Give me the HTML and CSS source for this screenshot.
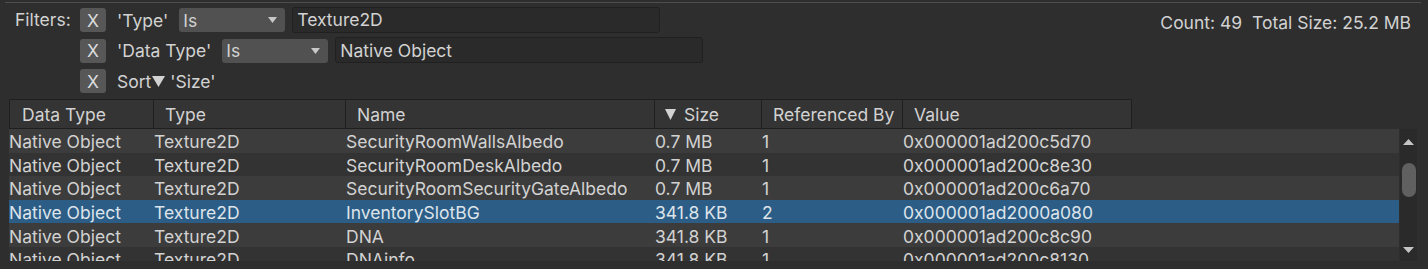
FILE: index.html
```html
<!DOCTYPE html>
<html>
<head>
<meta charset="utf-8">
<link rel="stylesheet" href="styles.css">
</head>
<body>
<div class="topline"></div>
<div class="toolbar">
  <div class="filters">
    <div class="flabel">Filters:</div>
    <div class="frow">
      <button class="xbtn">X</button>
      <span class="fname">'Type'</span>
      <div class="dropdown"><span>Is</span><svg class="ddarrow" width="9" height="6" viewBox="0 0 9 6"><path d="M0 0H9L4.5 6Z" fill="#c8c8c8"/></svg></div>
      <div class="field">Texture2D</div>
    </div>
    <div class="frow r2">
      <button class="xbtn">X</button>
      <span class="fname">'Data Type'</span>
      <div class="dropdown"><span>Is</span><svg class="ddarrow" width="9" height="6" viewBox="0 0 9 6"><path d="M0 0H9L4.5 6Z" fill="#c8c8c8"/></svg></div>
      <div class="field">Native Object</div>
    </div>
    <div class="frow r3">
      <button class="xbtn">X</button>
      <span class="fname">Sort<svg class="sortarrow" width="13" height="11" viewBox="0 0 13 11"><path d="M0 0H13L6.5 11Z" fill="#d2d2d2"/></svg> 'Size'</span>
    </div>
  </div>
  <div class="summary">Count: 49&nbsp;&nbsp;Total Size: 25.2 MB</div>
</div>
<div class="table">
  <div class="header">
    <div class="hcell c1">Data Type</div>
    <div class="hcell c2">Type</div>
    <div class="hcell c3">Name</div>
    <div class="hcell c4"><svg class="harrow" width="11" height="11" viewBox="0 0 11 11"><path d="M0 0H11L5.5 11Z" fill="#d2d2d2"/></svg>Size</div>
    <div class="hcell c5">Referenced By</div>
    <div class="hcell c6">Value</div>
  </div>
  <div class="body">
    <div class="rows">
      <div class="row odd"><span class="c1">Native Object</span><span class="c2">Texture2D</span><span class="c3">SecurityRoomWallsAlbedo</span><span class="c4">0.7 MB</span><span class="c5">1</span><span class="c6">0x000001ad200c5d70</span></div>
      <div class="row even"><span class="c1">Native Object</span><span class="c2">Texture2D</span><span class="c3">SecurityRoomDeskAlbedo</span><span class="c4">0.7 MB</span><span class="c5">1</span><span class="c6">0x000001ad200c8e30</span></div>
      <div class="row odd"><span class="c1">Native Object</span><span class="c2">Texture2D</span><span class="c3">SecurityRoomSecurityGateAlbedo</span><span class="c4">0.7 MB</span><span class="c5">1</span><span class="c6">0x000001ad200c6a70</span></div>
      <div class="row selected"><span class="c1">Native Object</span><span class="c2">Texture2D</span><span class="c3">InventorySlotBG</span><span class="c4">341.8 KB</span><span class="c5">2</span><span class="c6">0x000001ad2000a080</span></div>
      <div class="row odd"><span class="c1">Native Object</span><span class="c2">Texture2D</span><span class="c3">DNA</span><span class="c4">341.8 KB</span><span class="c5">1</span><span class="c6">0x000001ad200c8c90</span></div>
      <div class="row even"><span class="c1">Native Object</span><span class="c2">Texture2D</span><span class="c3">DNAinfo</span><span class="c4">341.8 KB</span><span class="c5">1</span><span class="c6">0x000001ad200c8130</span></div>
    </div>
    <div class="scrollbar">
      <svg class="sbup" width="11" height="6" viewBox="0 0 11 6"><path d="M5.5 0L11 6H0Z" fill="#c4c4c4"/></svg>
      <div class="thumb"></div>
      <svg class="sbdown" width="11" height="6" viewBox="0 0 11 6"><path d="M0 0H11L5.5 6Z" fill="#c4c4c4"/></svg>
    </div>
  </div>
</div>
</body>
</html>
```
FILE: styles.css
```css
* { box-sizing: border-box; }
html, body {
  margin: 0;
  padding: 0;
  background: #2e2e2e;
  width: 1428px;
  height: 269px;
  overflow: hidden;
  font-family: Inter, "Noto Sans", sans-serif;
  font-size: 17.5px;
  color: #d2d2d2;
}
.topline {
  margin: 2px 7px 0 5px;
  height: 1px;
  background: #4e4e4e;
}
.toolbar {
  display: flex;
  justify-content: space-between;
  align-items: flex-start;
  height: 96px;
  padding: 5px 17px 0 15px;
}
.filters {
  display: grid;
  grid-template-columns: 65px auto;
  grid-auto-rows: 24px;
  row-gap: 6.5px;
}
.flabel {
  grid-column: 1;
  grid-row: 1;
  line-height: 24px;
}
.frow {
  grid-column: 2;
  display: flex;
  align-items: center;
  height: 24px;
}
.frow.r2 { grid-row: 2; }
.frow.r3 { grid-row: 3; }
.xbtn {
  width: 26px;
  height: 24px;
  border: none;
  border-radius: 3px;
  background: #575757;
  color: #dcdcdc;
  font-family: inherit;
  font-size: 17.5px;
  padding: 0;
  margin-right: 11px;
}
.fname {
  margin-right: 11px;
  display: flex;
  align-items: center;
  white-space: pre;
}
.sortarrow { margin: 0 0 0 1px; }
.dropdown {
  width: 106px;
  height: 24px;
  background: #515151;
  border-radius: 3px;
  display: flex;
  align-items: center;
  justify-content: space-between;
  padding: 0 8px 0 4px;
  margin-right: 7px;
}
.field {
  width: 368px;
  height: 26px;
  background: #2a2a2a;
  border: 1px solid #202020;
  border-radius: 3px;
  padding: 0 4px;
  display: flex;
  align-items: center;
  margin-top: -1px;
}
.summary {
  line-height: 24px;
  padding-top: 3px;
  white-space: pre;
}
.table {
  margin-left: 9px;
}
.header {
  display: flex;
  height: 30px;
}
.hcell {
  height: 30px;
  border: 1px solid #1f1f1f;
  border-left: none;
  background: #343434;
  padding-left: 11px;
  display: flex;
  align-items: center;
}
.hcell.c1 { border-left: 1px solid #1f1f1f; padding-left: 12px; }
.c1 { width: 145px; }
.c2 { width: 192px; }
.c3 { width: 309px; }
.c4 { width: 107px; }
.c5 { width: 141px; }
.c6 { width: 229px; }
.harrow { margin-right: 8px; margin-top: 1px; }
.hcell.c4 { padding-left: 10px; }
.body {
  display: flex;
  height: 132px;
}
.rows {
  width: 1390px;
  overflow: hidden;
}
.row {
  display: flex;
  height: 23.6px;
  align-items: center;
  white-space: nowrap;
  padding-top: 2px;
}
.row.odd { background: #3c3c3c; }
.row.even { background: #333333; }
.row.selected { background: #2c5d87; color: #dde4ea; }
.scrollbar {
  margin-left: 1px;
  width: 17px;
  background: #2a2a2a;
  display: flex;
  flex-direction: column;
  align-items: center;
}
.sbup { margin-top: 10px; }
.thumb {
  margin-top: 18px;
  width: 14px;
  height: 34px;
  border-radius: 7px;
  background: #606060;
}
.sbdown { margin-top: 50px; }
```
